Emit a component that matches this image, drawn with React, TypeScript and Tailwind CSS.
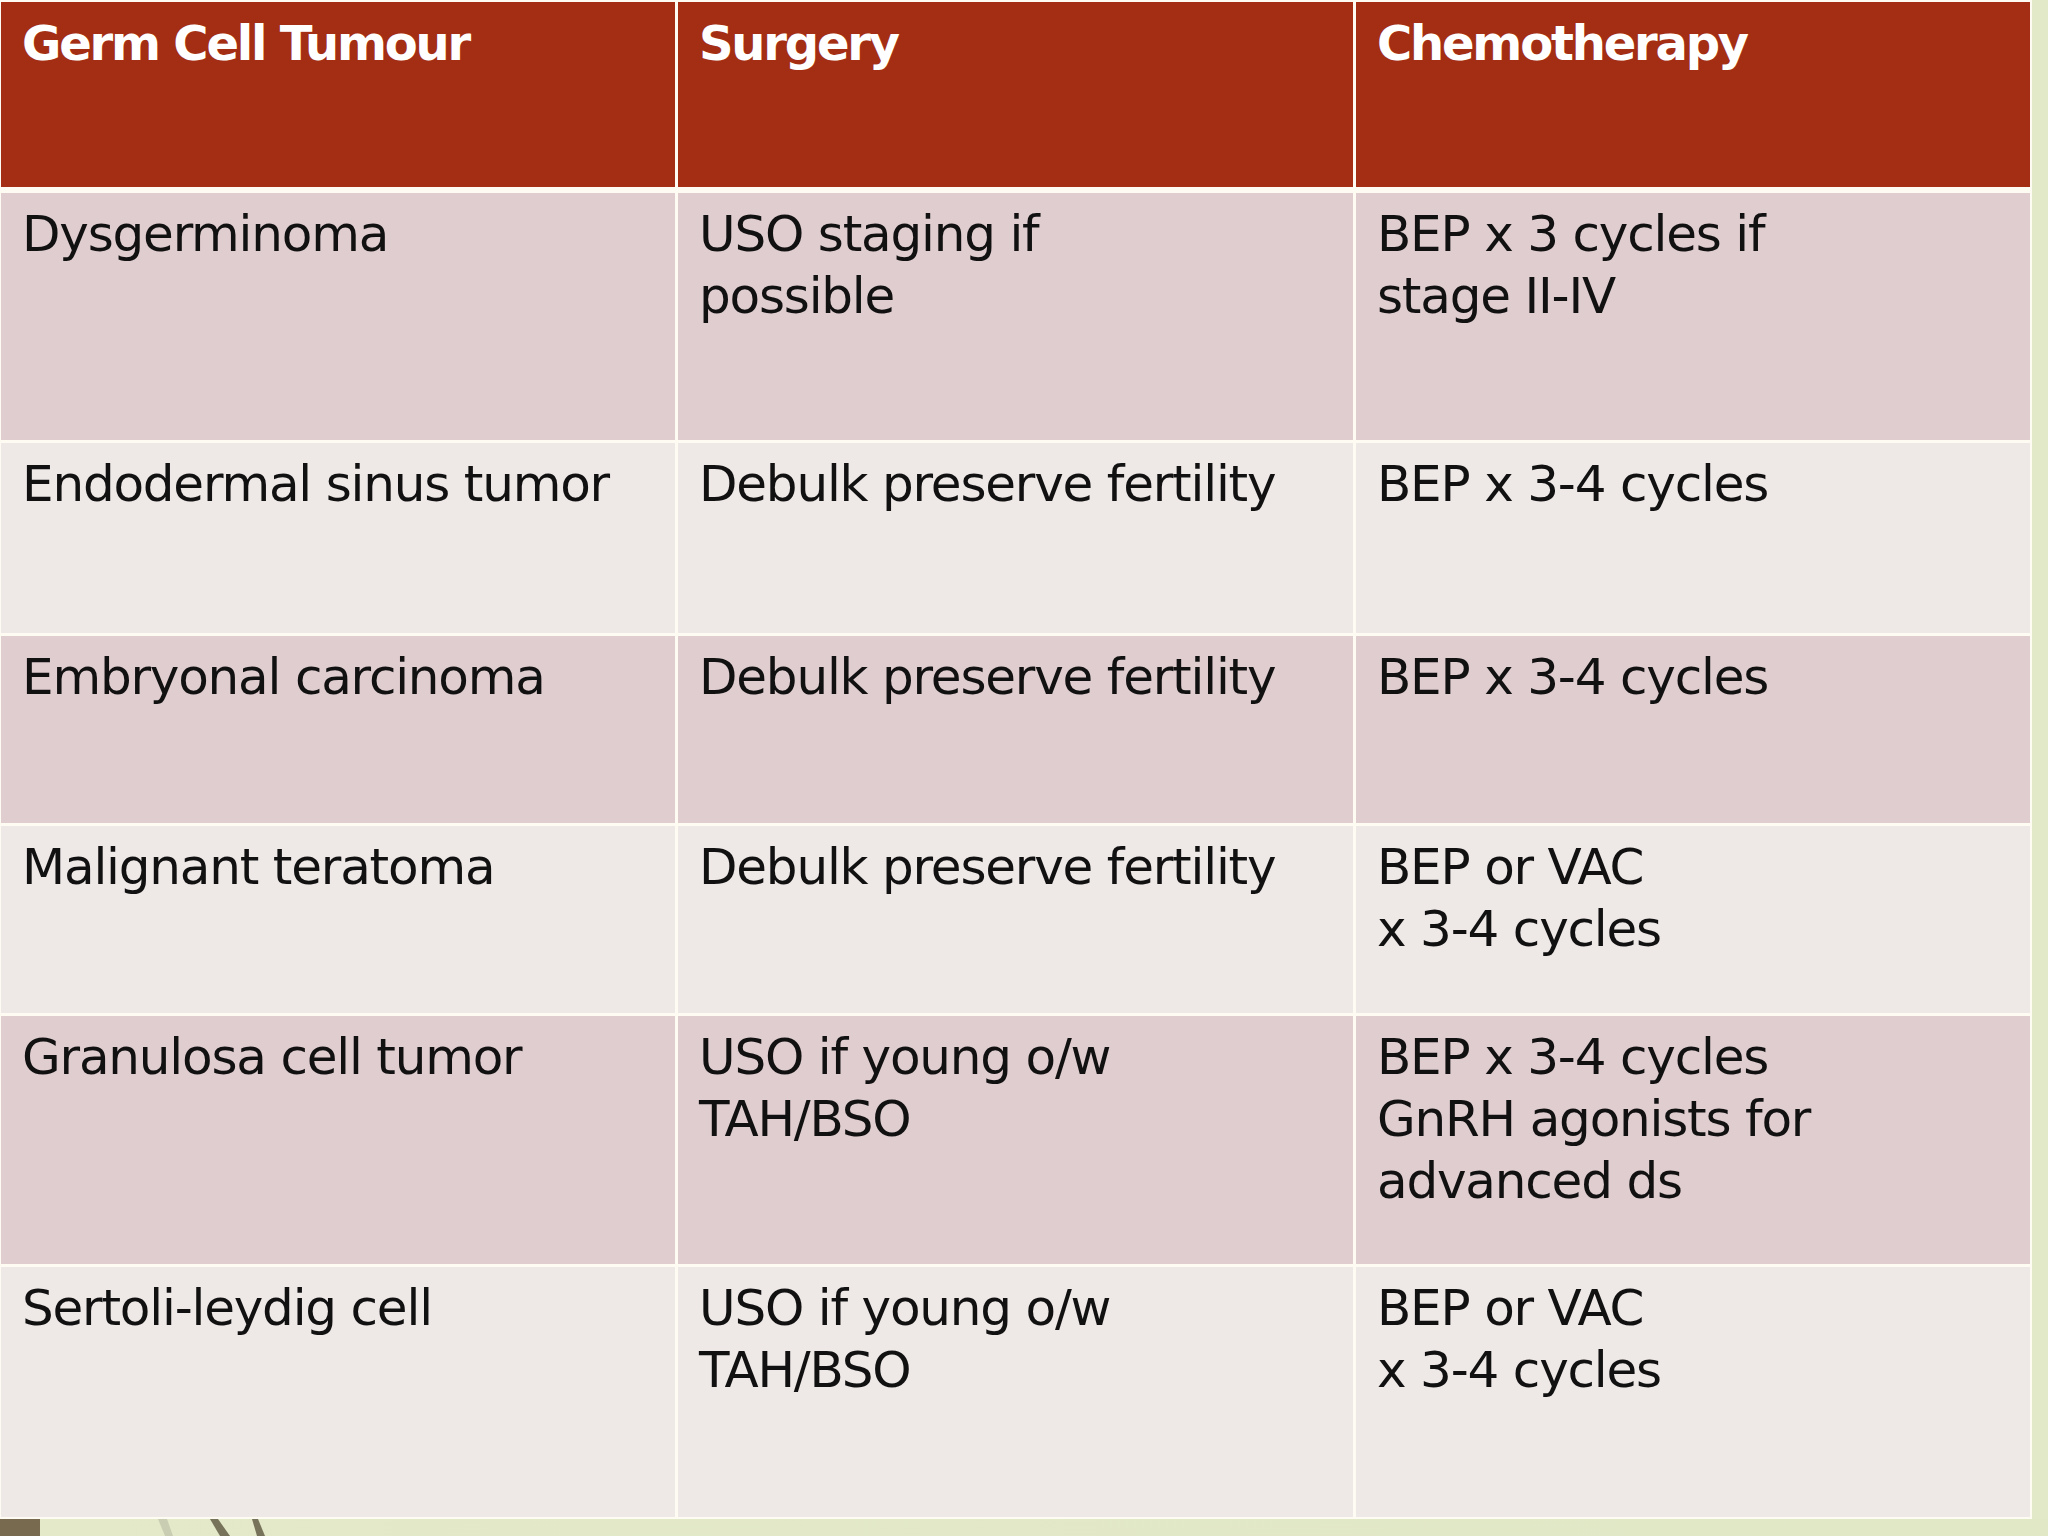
import React from 'react';

type Row = {
  tone: 'pink' | 'light';
  height: string;
  cells: string[][];
};

const rows: Row[] = [
  { tone: 'pink', height: 'h-[247px]', cells: [['Dysgerminoma'], ['USO staging if', 'possible'], ['BEP x 3 cycles if', 'stage II-IV']] },
  { tone: 'light', height: 'h-[190px]', cells: [['Endodermal sinus tumor'], ['Debulk preserve fertility'], ['BEP x 3-4 cycles']] },
  { tone: 'pink', height: 'h-[187px]', cells: [['Embryonal carcinoma'], ['Debulk preserve fertility'], ['BEP x 3-4 cycles']] },
  { tone: 'light', height: 'h-[187px]', cells: [['Malignant teratoma'], ['Debulk preserve fertility'], ['BEP or VAC', 'x 3-4 cycles']] },
  { tone: 'pink', height: 'h-[248px]', cells: [['Granulosa cell tumor'], ['USO if young o/w', 'TAH/BSO'], ['BEP x 3-4 cycles', 'GnRH agonists for', 'advanced ds']] },
  { tone: 'light', height: 'h-[250px]', cells: [['Sertoli-leydig cell'], ['USO if young o/w', 'TAH/BSO'], ['BEP or VAC', 'x 3-4 cycles']] },
];

const headers = ['Germ Cell Tumour', 'Surgery', 'Chemotherapy'];

function Cell({ lines, tone }: { lines: string[]; tone: 'pink' | 'light' }) {
  return (
    <div
      className={`${tone === 'pink' ? 'bg-[#e0cdd0]' : 'bg-[#eee8e7]'} pl-[21px] pt-[10px] text-[50px] leading-[62px] tracking-[-1.2px] text-[#111]`}
    >
      {lines.map((line, i) => (
        <div key={i}>{line}</div>
      ))}
    </div>
  );
}

export default function App() {
  return (
    <div className="w-[2048px] h-[1536px] bg-[#e2e9c9] flex flex-col font-['DejaVu_Sans',sans-serif]">
      {/* Table */}
      <div className="w-[2032px] bg-[#fdfbf2] pt-[2px] pl-[1px] pr-[2px] pb-[2px] flex flex-col gap-[3px]">
        <div className="grid grid-cols-[674px_675px_674px] gap-x-[3px] h-[185px] mb-[3px]">
          {headers.map((h) => (
            <div
              key={h}
              className="bg-[#a32e13] pl-[21px] pt-[10px] text-white font-bold text-[48px] leading-[62px] tracking-[-2.2px]"
            >
              {h}
            </div>
          ))}
        </div>
        {rows.map((row, i) => (
          <div key={i} className={`grid grid-cols-[674px_675px_674px] gap-x-[3px] ${row.height}`}>
            {row.cells.map((lines, j) => (
              <Cell key={j} lines={lines} tone={row.tone} />
            ))}
          </div>
        ))}
      </div>

      {/* Slide footer strip */}
      <div className="flex-1 flex bg-gradient-to-r from-[#e3e9c9] to-[#e1e8c6]">
        <div className="w-[40px] bg-[#786a4f]" />
        <svg width="260" height="17" viewBox="0 0 260 17">
          <polygon points="118,0 127,0 133,17 125,17" fill="#c9cdb2" />
          <polygon points="170,0 178,0 190,17 180,17" fill="#77735a" />
          <polygon points="212,0 218,0 225,17 217,17" fill="#77735a" />
        </svg>
      </div>
    </div>
  );
}
